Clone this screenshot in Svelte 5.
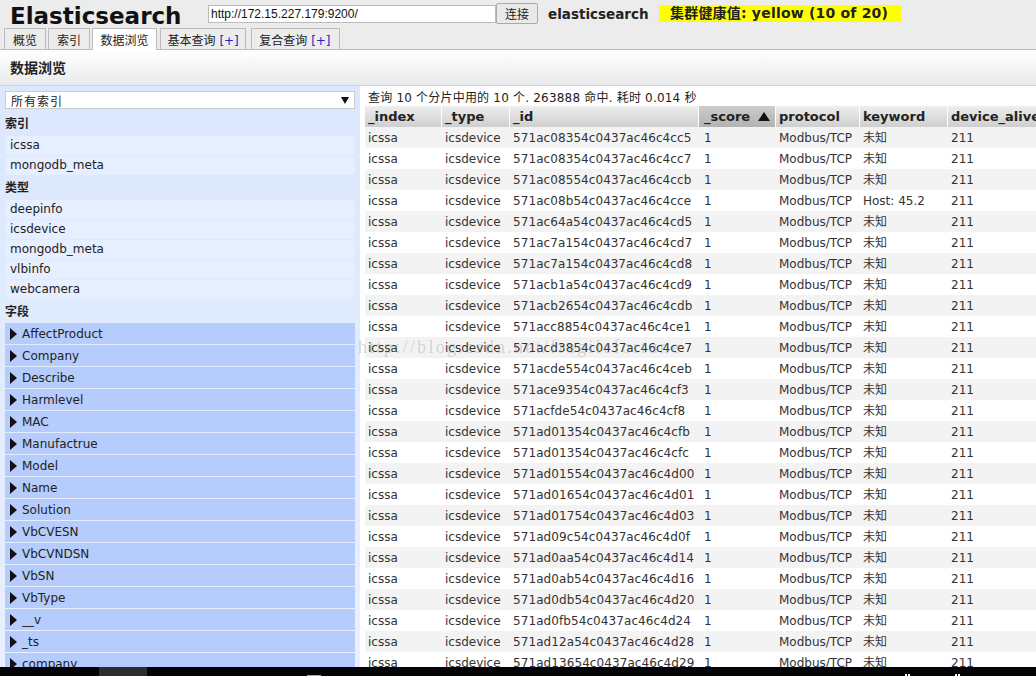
<script>
  const ids = ['571ac08354c0437ac46c4cc5','571ac08354c0437ac46c4cc7','571ac08554c0437ac46c4ccb','571ac08b54c0437ac46c4cce','571ac64a54c0437ac46c4cd5','571ac7a154c0437ac46c4cd7','571ac7a154c0437ac46c4cd8','571acb1a54c0437ac46c4cd9','571acb2654c0437ac46c4cdb','571acc8854c0437ac46c4ce1','571acd3854c0437ac46c4ce7','571acde554c0437ac46c4ceb','571ace9354c0437ac46c4cf3','571acfde54c0437ac46c4cf8','571ad01354c0437ac46c4cfb','571ad01354c0437ac46c4cfc','571ad01554c0437ac46c4d00','571ad01654c0437ac46c4d01','571ad01754c0437ac46c4d03','571ad09c54c0437ac46c4d0f','571ad0aa54c0437ac46c4d14','571ad0ab54c0437ac46c4d16','571ad0db54c0437ac46c4d20','571ad0fb54c0437ac46c4d24','571ad12a54c0437ac46c4d28','571ad13654c0437ac46c4d29'];
  const fields = ['AffectProduct','Company','Describe','Harmlevel','MAC','Manufactrue','Model','Name','Solution','VbCVESN','VbCVNDSN','VbSN','VbType','__v','_ts','company'];
</script>

<div class="page">
  <header class="top">
    <div class="bar">
      <h1>Elasticsearch</h1>
      <input class="url" value="http://172.15.227.179:9200/" />
      <button class="connect">连接</button>
      <span class="cluster">elasticsearch</span>
      <span class="health">集群健康值: yellow (10 of 20)</span>
    </div>
    <nav class="tabs">
      <span class="tab">概览</span>
      <span class="tab">索引</span>
      <span class="tab active">数据浏览</span>
      <span class="tab basic">基本查询 <b>[+]</b></span>
      <span class="tab last">复合查询 <b>[+]</b></span>
    </nav>
  </header>
  <div class="title"><h2>数据浏览</h2></div>
  <main class="body">
    <aside class="side">
      <div class="select"><span>所有索引</span><i></i></div>
      <h3 class="first">索引</h3>
      <div class="group">
        <div class="item">icssa</div>
        <div class="item">mongodb_meta</div>
      </div>
      <h3>类型</h3>
      <div class="group">
        <div class="item">deepinfo</div>
        <div class="item">icsdevice</div>
        <div class="item">mongodb_meta</div>
        <div class="item">vlbinfo</div>
        <div class="item">webcamera</div>
      </div>
      <h3 class="fieldhead">字段</h3>
      {#each fields as f}
        <div class="field"><i></i>{f}</div>
      {/each}
    </aside>
    <section class="results">
      <div class="summary">查询 10 个分片中用的 10 个. 263888 命中. 耗时 0.014 秒</div>
      <div class="table">
        <div class="row head">
          <span class="c1">_index</span><span class="c2">_type</span><span class="c3">_id</span>
          <span class="c4 sorted">_score <i></i></span><span class="c5">protocol</span><span class="c6">keyword</span><span class="c7">device_alive_</span>
        </div>
        {#each ids as id, i}
          <div class="row" class:odd={i % 2 === 0}>
            <span class="c1">icssa</span><span class="c2">icsdevice</span><span class="c3">{id}</span>
            <span class="c4">1</span><span class="c5">Modbus/TCP</span><span class="c6">{i === 3 ? 'Host: 45.2' : '未知'}</span><span class="c7">211</span>
          </div>
        {/each}
      </div>
      <div class="mark">http://blog.csdn.net/fragilefortune</div>
    </section>
  </main>
  <footer class="task">
    <span class="btn"></span>
    <span class="chip"></span>
    <span class="tick t1"></span>
    <span class="tick t2"></span>
  </footer>
</div>

<style>
  :global(body) { margin: 0; background: #fff; }
  .page { width: 1036px; height: 676px; overflow: hidden; display: flex; flex-direction: column; font: 12px "DejaVu Sans", "Noto Sans CJK SC", sans-serif; color: #222; position: relative; }
  .top { height: 49px; background: #ececec; border-bottom: 1px solid #bbb; display: flex; flex-direction: column; flex: none; }
  .bar { height: 27px; flex: none; display: flex; align-items: center; padding-left: 10px; }
  h1 { margin: 4px 0 0; font: bold 23px "DejaVu Sans", sans-serif; color: #111; width: 198px; }
  .url { width: 282px; height: 14px; padding: 1px 2px; border: 1px solid #bbb; font: 12px "Liberation Sans", sans-serif; margin: 0; background: #fff; color: #111; }
  .connect { width: 42px; height: 21px; padding: 0; margin: 0; border: 1px solid #aaa; background: #e9e9e9; border-radius: 2px; font: 12px "Noto Sans CJK SC", sans-serif; color: #222; }
  .cluster { margin-left: 10px; width: 111px; font-weight: bold; font-size: 13.5px; color: #222; }
  .health { background: #ff0; width: 231px; padding-left: 11px; height: 17px; line-height: 17px; font-weight: bold; font-size: 14px; letter-spacing: .2px; color: #222; white-space: nowrap; }
  .tabs { display: flex; padding-left: 4px; gap: 2px; flex: 1; align-items: flex-end; }
  .tab { height: 20px; line-height: 25px; padding: 0 8px; border: 1px solid #bbb; border-bottom: 0; background: #ececec; color: #222; white-space: nowrap; }
  .tab b { font-weight: normal; color: #22c; }
  .tab.basic { margin-left: 1px; padding: 0 6.5px; }
  .tab.last { margin-left: 3px; padding: 0 8px 0 7px; }
  .tab.active { background: #fff; height: 21px; margin-bottom: -1px; position: relative; padding: 0 7.5px; }
  .title { flex: none; background: linear-gradient(#fff, #e9eaeb); border-bottom: 1px solid #c9d3e6; display: flex; align-items: center; padding: 0 0 2px 10px; box-sizing: border-box; height: 36px; }
  h2 { margin: 0; font: bold 14px "Noto Sans CJK SC", sans-serif; color: #222; }
  .body { flex: none; height: 581px; display: flex; overflow: hidden; }
  .side { width: 360px; box-sizing: border-box; padding: 5px 5px 0; background: linear-gradient(#dbe7fd, #e8f0ff); flex: none; overflow: hidden; }
  .select { height: 16px; background: #fff; border: 1px solid #ccc; display: flex; align-items: center; justify-content: space-between; padding: 0 5px; letter-spacing: 1px; }
  .select i { border: 4px solid transparent; border-top: 7px solid #111; border-bottom: 0; }
  h3 { margin: 4px 0 5px; height: 16px; font: bold 12px/16px "Noto Sans CJK SC", sans-serif; color: #222; }
  h3.first { margin-top: 6px; }
  h3.fieldhead { margin-bottom: 4px; }
  .group { margin-bottom: 4px; }
  .item { height: 19px; line-height: 19px; margin-bottom: 1px; padding-left: 5px; color: #222; background: #e6efff; border-radius: 4px; }
  .field { height: 21px; background: #b6ccfd; margin-bottom: 1px; padding-left: 5px; display: flex; align-items: center; width: 350px; box-sizing: border-box; color: #222; }
  .field i { width: 0; height: 0; border: 6px solid transparent; border-left: 7px solid #111; border-right: 0; margin-right: 5px; }
  .results { flex: 1; position: relative; padding: 2px 0 0 5px; min-width: 0; }
  .summary { height: 18px; line-height: 20px; padding-left: 3px; color: #222; white-space: nowrap; letter-spacing: .2px; }
  .table { width: 680px; }
  .row { display: flex; height: 21px; line-height: 22px; color: #333; white-space: nowrap; }
  .row.odd { background: #f3f3f3; }
  .row span { box-sizing: border-box; padding-left: 3px; margin-right: 1px; overflow: hidden; display: block; flex: none; height: 21px; }
  .head span { background: linear-gradient(#eee, #cfcfcf); font-weight: bold; font-size: 13px; line-height: 21px; color: #222; }
  .head .sorted { background: linear-gradient(#ccc, #b2b2b2); }
  .sorted i { display: inline-block; border: 6px solid transparent; border-bottom: 9px solid #111; border-top: 0; margin-left: 3px; }
  .c1 { width: 76px; }
  .c2 { width: 67px; }
  .c3 { width: 188px; letter-spacing: .08px; }
  .c4 { width: 76px; padding-left: 5px !important; }
  .c5 { width: 83px; }
  .c6 { width: 87px; }
  .c7 { width: 110px; }
  .mark { position: absolute; left: -2px; top: 251px; font: 18px "Liberation Serif", serif; letter-spacing: 2.3px; color: rgba(130,130,130,.3); white-space: nowrap; pointer-events: none; }
  .task { position: absolute; left: 0; right: 0; bottom: 0; height: 9px; background: #020308; display: flex; align-items: flex-end; }
  .btn { margin-left: 99px; width: 48px; height: 9px; background: #2b2d33; }
  .chip { margin-left: 160px; width: 14px; height: 1px; background: #aaa; }
  .tick { height: 2px; width: 6px; background: repeating-linear-gradient(90deg, #fff 0 2px, #020308 2px 3px); }
  .t1 { margin-left: 584px; }
  .t2 { margin-left: 44px; }
</style>
